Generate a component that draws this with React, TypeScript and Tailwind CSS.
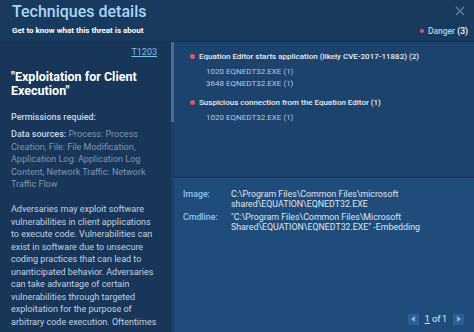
import React from "react";

const font = { fontFamily: "Roboto, 'Liberation Sans', sans-serif" };

function Bullet({ title, items }: { title: string; items: string[] }) {
  return (
    <div className="flex flex-col">
      <div className="flex items-center gap-[4px] text-[8px] font-medium text-[#e8eef6] leading-[11px]">
        <span className="w-[5px] h-[5px] rounded-full bg-[#e0566a]" />
        <span>{title}</span>
      </div>
      <div className="flex flex-col pl-[16px] pt-[4px] gap-[1px]">
        {items.map((it, i) => (
          <span key={i} className="text-[8px] leading-[11px] text-[#b9c8db]">
            {it}
          </span>
        ))}
      </div>
    </div>
  );
}

function PagerButton({ dir }: { dir: "left" | "right" }) {
  return (
    <span className="w-[11px] h-[11px] flex items-center justify-center bg-[#2c5f93]">
      <svg width="4" height="6" viewBox="0 0 4 6">
        <path d={dir === "left" ? "M4 0 L0 3 L4 6 Z" : "M0 0 L4 3 L0 6 Z"} fill="#7fb6e6" />
      </svg>
    </span>
  );
}

export default function App() {
  return (
    <div
      className="w-[474px] h-[332px] overflow-hidden flex flex-col bg-[#193a5d]"
      style={font}
    >
      {/* header */}
      <header className="h-[42px] shrink-0 flex justify-between bg-[#183a5e] border-b border-[#12304f]">
        <div className="flex flex-col pl-[12px] pt-[2px]">
          <h1 className="text-[16px] leading-[20px] font-medium text-[#a9d6f7]">
            Techniques details
          </h1>
          <p className="text-[8px] leading-[10px] font-bold text-white mt-[4px]">
            Get to know what this threat is about
          </p>
        </div>
        <div className="flex flex-col items-end pr-[6px] pt-[5px]">
          <svg width="12" height="12" viewBox="0 0 12 12" className="mr-[2px]">
            <path d="M2 2 L10 10 M10 2 L2 10" stroke="#5f82aa" strokeWidth="1.2" />
          </svg>
          <div className="flex items-center gap-[4px] mt-[8px] text-[8.5px] font-medium text-[#a9d6f7]">
            <span className="w-[4px] h-[4px] rounded-full bg-[#e0566a]" />
            <span>
              Danger <span className="text-white">(3)</span>
            </span>
          </div>
        </div>
      </header>

      <div className="flex-1 flex min-h-0">
        {/* left column */}
        <div className="w-[174px] shrink-0 flex bg-[#173659]">
          <div className="flex-1 flex flex-col pl-[11px] pr-[12px] pt-[4px] overflow-hidden">
            <div className="flex justify-end pr-[2px]">
              <span className="text-[9px] leading-[12px] text-[#7cc0f0] underline underline-offset-[1px]">
                T1203
              </span>
            </div>
            <h2 className="mt-[12px] text-[12.5px] leading-[14px] font-bold text-white">
              "Exploitation for Client Execution"
            </h2>
            <p className="mt-[13px] text-[9px] leading-[12.5px] font-medium text-[#c7d6e6]">
              Permissions requied:
            </p>
            <p className="mt-[4.5px] text-[9px] leading-[12.5px] text-[#8197b0]">
              <span className="font-medium text-[#c7d6e6]">Data sources:</span>{" "}
              Process: Process Creation, File: File Modification, Application Log: Application Log Content, Network Traffic: Network Traffic Flow
            </p>
            <p className="mt-[12.5px] text-[9px] leading-[12.5px] text-[#c4d2e2]">
              Adversaries may exploit software vulnerabilities in client applications to execute code. Vulnerabilities can exist in software due to unsecure coding practices that can lead to unanticipated behavior. Adversaries can take advantage of certain vulnerabilities through targeted exploitation for the purpose of arbitrary code execution. Oftentimes
            </p>
          </div>
          <div className="w-[3px] bg-[#1c3f64] flex flex-col">
            <div className="h-[80px] bg-[#4d6f94]" />
          </div>
        </div>

        {/* right column */}
        <div className="flex-1 flex flex-col min-w-0">
          <div className="h-[136px] shrink-0 flex flex-col gap-[8px] pl-[16px] pt-[9px] bg-[#1c436e] border-b-2 border-[#17395e]">
            <Bullet
              title="Equation Editor starts application (likely CVE-2017-11882) (2)"
              items={["1020 EQNEDT32.EXE (1)", "3648 EQNEDT32.EXE (1)"]}
            />
            <Bullet
              title="Suspicious connection from the Equation Editor (1)"
              items={["1020 EQNEDT32.EXE (1)"]}
            />
          </div>
          <div className="flex-1 flex flex-col bg-[#1f4c7b] pl-[9px] pr-[6px] pt-[11px]">
            <div className="grid grid-cols-[48px_1fr] gap-y-[3px] text-[8.8px] leading-[10px]">
              <span className="font-medium text-[#8ec8f2]">Image:</span>
              <span className="text-[#dfe7f1]">
                C:\Program Files\Common Files\microsoft
                <br />
                shared\EQUATION\EQNEDT32.EXE
              </span>
              <span className="font-medium text-[#8ec8f2]">Cmdline:</span>
              <span className="text-[#dfe7f1]">
                "C:\Program Files\Common Files\Microsoft
                <br />
                Shared\EQUATION\EQNEDT32.EXE" -Embedding
              </span>
            </div>
            <div className="mt-auto mb-[7px] flex justify-end items-center gap-[6px] pr-[4px]">
              <PagerButton dir="left" />
              <span className="text-[9.5px] leading-[12px] text-[#dfe7f1]">
                <span className="underline">1</span>
                <span className="ml-[2px]">of</span>
                <span className="ml-[1px]">1</span>
              </span>
              <PagerButton dir="right" />
            </div>
          </div>
        </div>
      </div>
    </div>
  );
}
